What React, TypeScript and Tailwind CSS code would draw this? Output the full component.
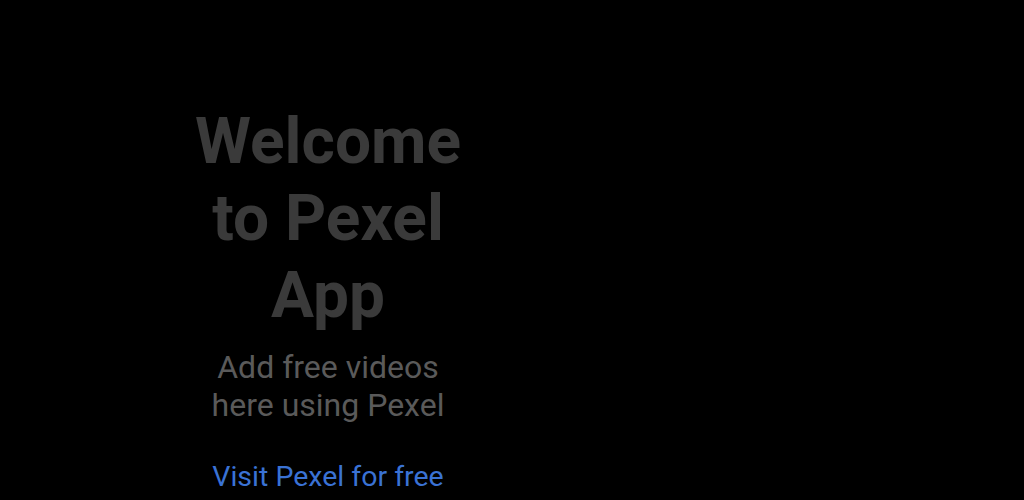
export default function App() {
  return (
    <div className="min-h-screen w-full bg-black overflow-hidden" style={{ fontFamily: "Roboto, sans-serif" }}>
      <div className="ml-[194px] w-[268px] pt-[103px] flex flex-col items-center text-center">
        <h1 className="text-[64px] leading-[77px] font-bold text-[#3a3a3a]">Welcome to Pexel App</h1>
        <p className="mt-[15px] text-[32px] leading-[37.5px] text-[#5a5a5a]">Add free videos here using Pexel</p>
        <a href="#" className="mt-[35px] text-[28.5px] leading-[36px] text-[#3a72d4]">
          Visit Pexel for free videos
        </a>
      </div>
    </div>
  );
}
